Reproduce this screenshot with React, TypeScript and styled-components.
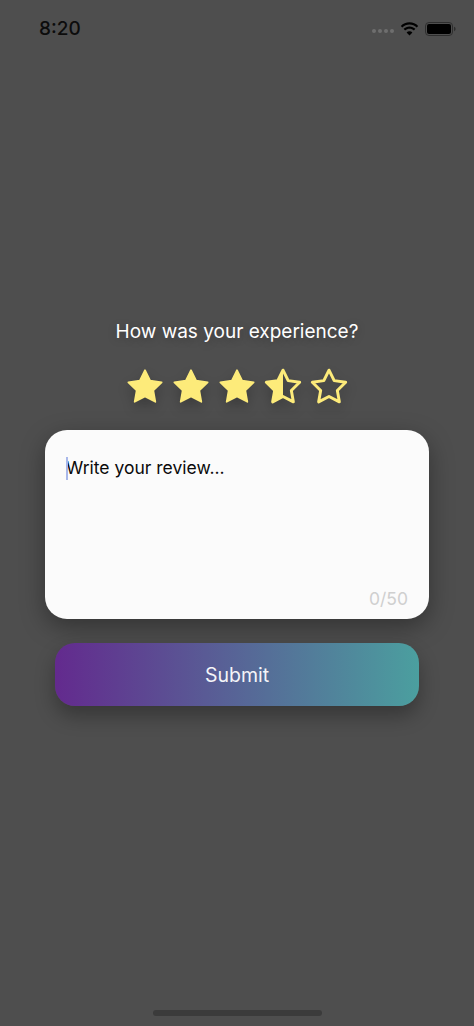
import React from 'react';
import styled, { createGlobalStyle } from 'styled-components';

const GlobalStyle = createGlobalStyle`
  html, body {
    margin: 0;
    padding: 0;
    background: #4e4e4e;
  }
  * {
    box-sizing: border-box;
  }
`;

const Screen = styled.div`
  width: 474px;
  height: 1026px;
  background: #4e4e4e;
  display: flex;
  flex-direction: column;
  font-family: Inter, "Liberation Sans", sans-serif;
  overflow: hidden;
`;

const StatusBar = styled.div`
  height: 60px;
  padding: 17px 18px 0 39px;
  display: flex;
  justify-content: space-between;
  align-items: flex-start;
`;

const Time = styled.div`
  font-size: 19px;
  line-height: 23px;
  font-weight: 500;
  color: #0c0c0c;
`;

const StatusIcons = styled.div`
  display: flex;
  align-items: center;
  gap: 6px;
  height: 23px;
`;

const SignalDots = styled.div`
  display: flex;
  gap: 2px;
  margin-top: 5px;
`;

const SignalDot = styled.span`
  width: 4px;
  height: 4px;
  border-radius: 50%;
  background: #6e6e6e;
`;

const Content = styled.main`
  flex: 1;
  padding: 260px 45px 0;
  display: flex;
  flex-direction: column;
  align-items: center;
`;

const Title = styled.h1`
  margin: 0;
  font-size: 19px;
  line-height: 24px;
  font-weight: 400;
  color: #ffffff;
  text-shadow: 0 2px 8px rgba(0, 0, 0, 0.25);
`;

const Stars = styled.div`
  margin-top: 23px;
  display: flex;
  gap: 8px;
  filter: drop-shadow(0 6px 6px rgba(0, 0, 0, 0.22));
`;

const Card = styled.div`
  margin-top: 25px;
  width: 384px;
  height: 189px;
  padding: 27px 21px 9px;
  background: #fbfbfb;
  border-radius: 22px;
  box-shadow: 0 8px 24px rgba(0, 0, 0, 0.35);
  display: flex;
  flex-direction: column;
  justify-content: space-between;
`;

const Placeholder = styled.div`
  position: relative;
  font-size: 17.5px;
  line-height: 22px;
  color: #0a0a0a;
`;

const Caret = styled.span`
  position: absolute;
  left: 0;
  top: 0;
  width: 2px;
  height: 23px;
  background: #a9b8ea;
`;

const Counter = styled.div`
  align-self: flex-end;
  font-size: 17.5px;
  line-height: 22px;
  color: #cfcfcf;
`;

const SubmitButton = styled.button`
  margin-top: 24px;
  width: 364px;
  height: 63px;
  border: none;
  border-radius: 20px;
  background: linear-gradient(90deg, #632a8e 0%, #4b9f9f 100%);
  box-shadow: 0 10px 20px rgba(0, 0, 0, 0.3);
  color: #f4f4f8;
  font-family: inherit;
  font-size: 19.5px;
  font-weight: 400;
`;

const HomeBar = styled.div`
  width: 169px;
  height: 6px;
  margin: 0 auto 10px;
  border-radius: 3px;
  background: #3b3b3b;
`;

const STAR_PATH =
  'M18 3 L22.9 12.9 L33.8 14.5 L25.9 22.2 L27.8 33 L18 27.9 L8.200 33 L10.100 22.200 L2.200 14.500 L13.100 12.900 Z';
const LEFT_HALF_PATH =
  'M18 3 L18 27.900 L8.200 33 L10.100 22.200 L2.200 14.500 L13.100 12.900 Z';
const STAR_COLOR = '#fdeb7a';

const Star: React.FC<{ fill: 'full' | 'half' | 'empty' }> = ({ fill }) => (
  <svg width="38" height="38" viewBox="0 0 36 36">
    {fill === 'half' && <path d={LEFT_HALF_PATH} fill={STAR_COLOR} />}
    <path
      d={STAR_PATH}
      fill={fill === 'full' ? STAR_COLOR : 'none'}
      stroke={STAR_COLOR}
      strokeWidth={fill === 'full' ? 1.6 : 2.8}
      strokeLinejoin="round"
    />
  </svg>
);

const WifiIcon = () => (
  <svg width="19" height="14" viewBox="0 0 19 14">
    <path
      d="M9.5 2.6c2.8 0 5.3 1.1 7.2 2.9l1.5-1.6C15.9 1.7 12.9.3 9.5.3S3.1 1.7.8 3.9l1.5 1.6C4.2 3.7 6.7 2.6 9.5 2.6z"
      fill="#000"
    />
    <path
      d="M9.5 6.7c1.7 0 3.2.6 4.4 1.7l1.5-1.6C13.800 5.300 11.800 4.400 9.500 4.400S5.200 5.300 3.600 6.800l1.500 1.600C6.300 7.300 7.800 6.700 9.500 6.700z"
      fill="#000"
    />
    <path d="M9.500 13.500l2.900-3.100C11.600 9.700 10.600 9.300 9.500 9.300s-2.100.4-2.900 1.100z" fill="#000" />
  </svg>
);

const BatteryIcon = () => (
  <svg width="31" height="14" viewBox="0 0 31 14">
    <rect x="0.5" y="0.5" width="27" height="13" rx="3.500" fill="none" stroke="#2e2e2e" />
    <rect x="2" y="2" width="24" height="10" rx="2" fill="#000" />
    <path d="M29 4.800c1 .3 1.600 1.200 1.600 2.200s-.6 1.900-1.600 2.200z" fill="#2e2e2e" />
  </svg>
);

const App: React.FC = () => (
  <Screen>
    <GlobalStyle />
    <StatusBar>
      <Time>8:20</Time>
      <StatusIcons>
        <SignalDots>
          <SignalDot />
          <SignalDot />
          <SignalDot />
          <SignalDot />
        </SignalDots>
        <WifiIcon />
        <BatteryIcon />
      </StatusIcons>
    </StatusBar>
    <Content>
      <Title>How was your experience?</Title>
      <Stars>
        <Star fill="full" />
        <Star fill="full" />
        <Star fill="full" />
        <Star fill="half" />
        <Star fill="empty" />
      </Stars>
      <Card>
        <Placeholder>
          <Caret />
          Write your review...
        </Placeholder>
        <Counter>0/50</Counter>
      </Card>
      <SubmitButton>Submit</SubmitButton>
    </Content>
    <HomeBar />
  </Screen>
);

export default App;
